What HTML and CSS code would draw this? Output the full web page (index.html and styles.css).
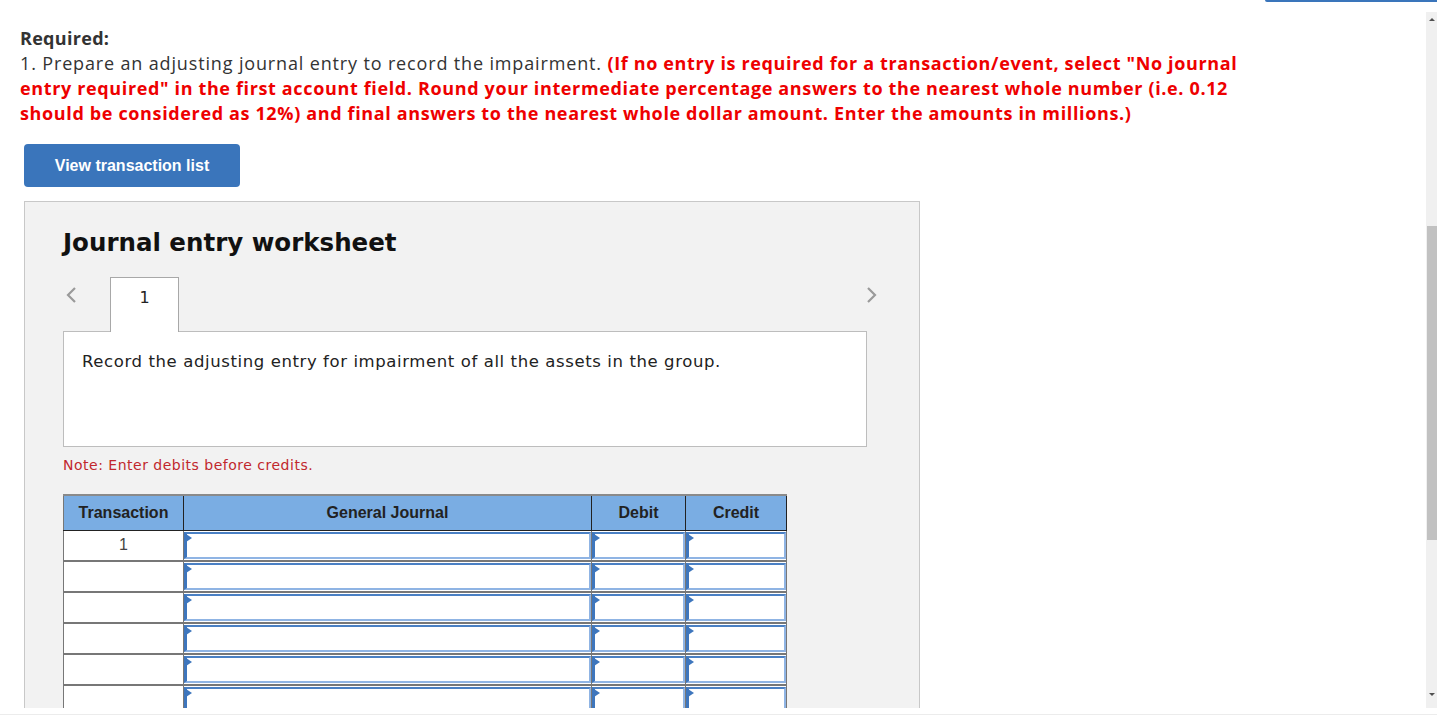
FILE: index.html
```html
<!DOCTYPE html>
<html lang="en">
<head>
<meta charset="utf-8">
<title>Journal entry worksheet</title>
<link rel="stylesheet" href="styles.css">
</head>
<body>
<div class="topstrip"><div class="topbtn"></div></div>
<div class="frame">
  <div class="viewport">
    <div class="required">
      <div class="req-title">Required:</div>
      <div class="req-text">1. Prepare an adjusting journal entry to record the impairment. <b class="red">(If no entry is required for a transaction/event, select "No journal</b><br><b class="red">entry required" in the first account field. Round your intermediate percentage answers to the nearest whole number (i.e. 0.12</b><br><b class="red">should be considered as 12%) and final answers to the nearest whole dollar amount. Enter the amounts in millions.)</b></div>
    </div>
    <button class="view-btn" type="button">View transaction list</button>
    <section class="worksheet">
      <h2 class="ws-title">Journal entry worksheet</h2>
      <div class="tabs">
        <span class="chev"><svg width="14" height="18" viewBox="0 0 14 18"><polyline points="11,2 4,9 11,16" fill="none" stroke="#9a9a9a" stroke-width="2.2"/></svg></span>
        <div class="tab">1</div>
        <span class="spacer"></span>
        <span class="chev"><svg width="14" height="18" viewBox="0 0 14 18"><polyline points="3,2 10,9 3,16" fill="none" stroke="#9a9a9a" stroke-width="2.2"/></svg></span>
      </div>
      <div class="desc">Record the adjusting entry for impairment of all the assets in the group.</div>
      <p class="note">Note: Enter debits before credits.</p>
      <table class="journal">
        <thead>
          <tr><th class="c-tr">Transaction</th><th class="c-gj">General Journal</th><th class="c-dr">Debit</th><th class="c-cr">Credit</th></tr>
        </thead>
        <tbody>
          <tr><td class="num">1</td><td class="in"><div class="box"></div></td><td class="in"><div class="box"></div></td><td class="in"><div class="box"></div></td></tr>
          <tr><td class="num"></td><td class="in"><div class="box"></div></td><td class="in"><div class="box"></div></td><td class="in"><div class="box"></div></td></tr>
          <tr><td class="num"></td><td class="in"><div class="box"></div></td><td class="in"><div class="box"></div></td><td class="in"><div class="box"></div></td></tr>
          <tr><td class="num"></td><td class="in"><div class="box"></div></td><td class="in"><div class="box"></div></td><td class="in"><div class="box"></div></td></tr>
          <tr><td class="num"></td><td class="in"><div class="box"></div></td><td class="in"><div class="box"></div></td><td class="in"><div class="box"></div></td></tr>
          <tr><td class="num"></td><td class="in"><div class="box"></div></td><td class="in"><div class="box"></div></td><td class="in"><div class="box"></div></td></tr>
          <tr><td class="num"></td><td class="in"><div class="box"></div></td><td class="in"><div class="box"></div></td><td class="in"><div class="box"></div></td></tr>
        </tbody>
      </table>
    </section>
  </div>
  <div class="scrollbar">
    <span class="arr up"></span>
    <div class="thumb"></div>
    <span class="arr down"></span>
  </div>
</div>
<div class="footer"></div>
</body>
</html>
```
FILE: styles.css
```css
* { box-sizing: border-box; }
html, body { margin: 0; padding: 0; background: #fff; }
body { width: 1437px; height: 724px; overflow: hidden; font-family: "Open Sans", "Lato", sans-serif; }

.topstrip { height: 12px; display: flex; justify-content: flex-end; }
.topbtn { width: 172px; height: 2px; background: #3a75bb; border-radius: 0 0 0 3px; }

.frame { height: 696px; display: flex; }
.viewport { flex: 1; overflow: hidden; padding: 14px 0 0 20px; }
.scrollbar { width: 11px; background: #f0f0f0; position: relative; display: flex; flex-direction: column; align-items: center; }
.thumb { position: absolute; left: 1px; right: 0; top: 214px; height: 314px; background: #c1c1c1; }
.arr { width: 0; height: 0; border-left: 3px solid transparent; border-right: 3px solid transparent; }
.arr.up { margin-top: 6px; border-bottom: 3px solid #505050; }
.arr.down { margin-top: auto; margin-bottom: 12px; border-top: 3px solid #505050; }

.footer { height: 16px; border-top: 1px solid #ececec; margin-top: 6px; }

.required { color: #333; font-size: 18px; line-height: 25px; letter-spacing: 0.85px; }
.req-title { font-weight: 700; letter-spacing: 0.3px; }
.red { color: #ee0000; font-weight: 700; letter-spacing: 0.64px; }

.view-btn { display: block; margin: 18px 0 0 4px; width: 216px; height: 43px; background: #3a75bb; border: none; border-radius: 4px; color: #fff; font-family: "Liberation Sans", Arial, sans-serif; font-weight: 700; font-size: 16px; padding: 0; }

.worksheet { margin: 14px 0 0 4px; width: 896px; height: 600px; background: #f2f2f2; border: 1px solid #c8c8c8; padding: 26px 0 0 38px; }
.ws-title { margin: 0; font-family: "DejaVu Sans", Verdana, sans-serif; font-weight: 700; font-size: 24.5px; line-height: 30px; color: #111; }

.tabs { display: flex; align-items: flex-start; margin-top: 19px; width: 818px; height: 54px; }
.chev { width: 20px; padding: 9px 0 0 1px; display: flex; }
.tab { margin-left: 27px; width: 69px; height: 55px; background: #fff; border: 1px solid #a8a8a8; border-bottom: none; font-family: "DejaVu Sans", Verdana, sans-serif; font-size: 16px; text-align: center; padding-top: 10px; color: #222; position: relative; z-index: 1; }
.spacer { flex: 1; }
.tabs .chev:last-child { padding-left: 4px; }

.desc { width: 804px; height: 116px; background: #fff; border: 1px solid #bdbdbd; padding: 20px 0 0 18px; font-family: "DejaVu Sans", Verdana, sans-serif; font-size: 16.5px; letter-spacing: 0.6px; color: #222; }
.note { margin: 9px 0 0; font-family: "DejaVu Sans", Verdana, sans-serif; font-size: 14px; letter-spacing: 0.5px; color: #c1272d; line-height: 18px; }

.journal { margin-top: 20px; border-collapse: collapse; width: 723px; table-layout: fixed; font-family: "Liberation Sans", Arial, sans-serif; }
.c-tr { width: 120px; }
.c-gj { width: 408px; }
.c-dr { width: 94px; }
.c-cr { width: 101px; }
.journal th { height: 35px; background: #7aade3; color: #222; font-size: 16px; font-weight: 700; border: 1px solid #222; border-top: 2px solid #8a8a8a; padding: 0; }
.journal th.c-tr { border-left: 1px solid #777; }
.journal td { height: 31px; padding: 0; border-left: 1px solid #777; border-right: 1px solid #777; border-bottom: 2px solid #777; }
.journal td.num { text-align: center; font-size: 16px; color: #444; vertical-align: top; padding-top: 5px; background: #fff; }
.journal td.in { padding: 1px 0 1px 0; background: #fff; }
.box { height: 27px; border: 2px solid #8fb4e4; border-top-color: #4a80c4; border-left: 3px solid #3e76bd; position: relative; background: #fff; }
.box::before { content: ""; position: absolute; left: -1px; top: 0; width: 0; height: 0; border-top: 4px solid transparent; border-bottom: 4px solid transparent; border-left: 6px solid #3e76bd; }
```
